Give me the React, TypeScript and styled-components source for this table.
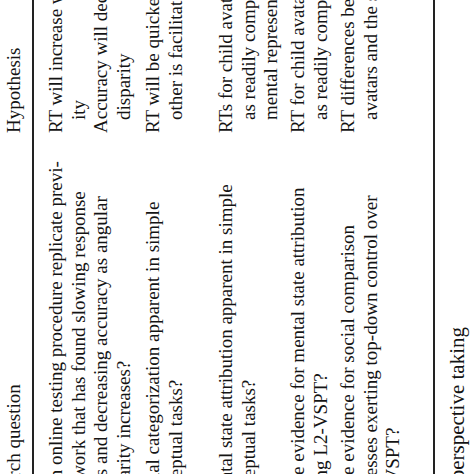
import React from "react";
import styled, { createGlobalStyle } from "styled-components";

type Row = {
   gap: number;
   question: string[][];
   hypothesis: string[][];
};

const rows: Row[] = [
   {
      gap: 10.8,
      question: [
         [
            "Can an online testing procedure replicate previ-",
            "ous work that has found slowing response",
            "times and decreasing accuracy as angular",
            "disparity increases?",
         ],
      ],
      hypothesis: [
         ["RT will increase with angular dispar-", "ity"],
         ["Accuracy will decrease with angular", "disparity"],
      ],
   },
   {
      gap: 7,
      question: [["Is visual categorization apparent in simple", "perceptual tasks?"]],
      hypothesis: [["RT will be quicker when the perspective of the", "other is facilitated by the avatar"]],
   },
   {
      gap: 28,
      question: [["Is mental state attribution apparent in simple", "perceptual tasks?"]],
      hypothesis: [
         [
            "RTs for child avatars will be slower if they are not",
            "as readily compatible with existing",
            "mental representations of others",
         ],
      ],
   },
   {
      gap: 4.5,
      question: [["Is there evidence for mental state attribution", "during L2-VSPT?"]],
      hypothesis: [["RT for child avatars will be slower if not", "as readily compatible with the self"]],
   },
   {
      gap: 5,
      question: [
         [
            "Is there evidence for social comparison",
            "processes exerting top-down control over",
            "L2-VSPT?",
         ],
      ],
      hypothesis: [["RT differences between child and adult", "avatars and the self will be greater"]],
   },
];

// the page is scanned sideways: the crop starts 49px into the first column
const CROP_LEFT = 49;

function Cell({ paragraphs }: { paragraphs: string[][] }) {
   return (
      <div>
         {paragraphs.map((lines, p) =>
            lines.map((line, i) => (
               <Line key={p + "-" + i} indent={i > 0}>
                  {line}
               </Line>
            ))
         )}
      </div>
   );
}

export default function App() {
   return (
      <>
         <GlobalStyle />
         <Sheet>
            <TableRow gap={0}>
               <Line>Research question</Line>
               <Line>Hypothesis</Line>
            </TableRow>
            <Rule gap={6.7} />

            {rows.map((row, idx) => (
               <TableRow key={idx} gap={row.gap}>
                  <Cell paragraphs={row.question} />
                  <Cell paragraphs={row.hypothesis} />
               </TableRow>
            ))}

            <Rule gap={28.2} />
            <Footnote>
               <span>Note. L2-VSPT = level-2 visual perspective taking</span>
            </Footnote>
         </Sheet>
      </>
   );
}

const GlobalStyle = createGlobalStyle`
   html, body {
      margin: 0;
      width: 474px;
      height: 474px;
      overflow: hidden;
      background: #ffffff;
   }
`;

const Sheet = styled.div`
   box-sizing: border-box;
   width: 900px;
   height: 474px;
   padding-top: 3.3px;
   transform-origin: 0 0;
   transform: translateY(${474 + CROP_LEFT}px) rotate(-90deg);
   font-family: "Liberation Serif", "Times New Roman", serif;
   font-size: 19px;
   line-height: 22.5px;
   color: #141414;
`;

const TableRow = styled.div<{ gap: number }>`
   display: grid;
   grid-template-columns: 365px 420px;
   column-gap: 25px;
   margin-top: ${(p) => p.gap}px;
`;

const Line = styled.div<{ indent?: boolean }>`
   white-space: nowrap;
   padding-left: ${(p) => (p.indent ? 13 : 0)}px;
`;

const Rule = styled.div<{ gap: number }>`
   margin-top: ${(p) => p.gap}px;
   height: 2px;
   background: #222222;
`;

const Footnote = styled.div`
   margin-top: 10.7px;
   width: ${147 + CROP_LEFT}px;
   display: flex;
   justify-content: flex-end;
   white-space: nowrap;
   font-size: 21px;
`;
